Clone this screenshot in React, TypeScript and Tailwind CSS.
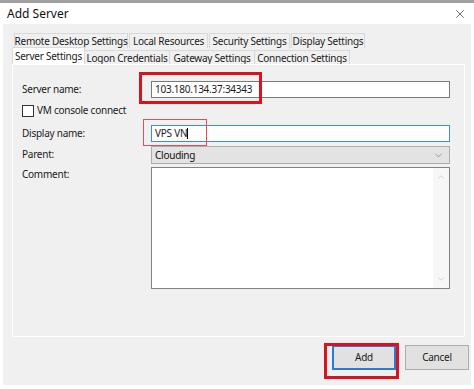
import { X, ChevronDown, ChevronUp } from "lucide-react";

const font = { fontFamily: '"Noto Sans", "Open Sans", sans-serif' };

const backTabs = [
  { label: "Remote Desktop Settings", w: "w-[114px]" },
  { label: "Local Resources", w: "w-[79px]" },
  { label: "Security Settings", w: "w-[81px]" },
  { label: "Display Settings", w: "w-[74px]" },
];

const frontTabs = [
  { label: "Logon Credentials", w: "w-[85px]" },
  { label: "Gateway Settings", w: "w-[85px]" },
  { label: "Connection Settings", w: "w-[95px]" },
];

export default function App() {
  return (
    <div
      className="w-[474px] h-[389px] bg-white overflow-hidden text-[10px] tracking-[-0.25px] whitespace-nowrap text-[#1b1b1b] relative"
      style={font}
    >
      {/* window top edge */}
      <div className="h-[3px] bg-[#a0a0a0]" />

      {/* title bar */}
      <div className="h-[21px] flex items-center justify-between pl-[7px] pr-[7px]">
        <span className="text-[12px] tracking-normal text-[#111]">Add Server</span>
        <X size={14} strokeWidth={1.2} className="text-[#333]" />
      </div>

      {/* body */}
      <div className="ml-[3px] mr-[3px] h-[361px] bg-[#f0f0f0] pt-[9px] flex flex-col">
        {/* back row of tabs */}
        <div className="flex pl-[11px] h-[14px] gap-[1px]">
          {backTabs.map((t) => (
            <div
              key={t.label}
              className={`${t.w} h-[15px] border border-b-0 border-[#d9d9d9] flex items-center justify-center leading-none`}
            >
              {t.label}
            </div>
          ))}
        </div>

        {/* front row of tabs */}
        <div className="flex pl-[9px] h-[17px] items-end">
          <div className="w-[73px] h-[17px] bg-white border border-b-0 border-[#d9d9d9] flex items-center justify-center leading-none relative z-10">
            Server Settings
          </div>
          {frontTabs.map((t) => (
            <div
              key={t.label}
              className={`${t.w} h-[14px] border border-b-0 border-l-0 border-[#d9d9d9] flex items-center justify-center leading-none`}
            >
              {t.label}
            </div>
          ))}
        </div>

        {/* tab panel */}
        <div className="ml-[9px] w-[453px] h-[273px] border border-white bg-[#f0f0f0] pl-[9px] pt-[16px]">
          <div className="flex items-center h-[17px]">
            <span className="w-[129px]">Server name:</span>
            <div className="w-[299px] h-[17px] bg-white border border-[#7a7a7a] flex items-center px-[3px]">
              103.180.134.37:34343
            </div>
          </div>

          <div className="flex items-center h-[13px] mt-[6px]">
            <div className="w-[12px] h-[12px] border border-[#333] bg-white" />
            <span className="ml-[3px]">VM console connect</span>
          </div>

          <div className="flex items-center h-[17px] mt-[8px]">
            <span className="w-[129px]">Display name:</span>
            <div className="w-[299px] h-[17px] bg-white border border-[#3b8ddd] flex items-center px-[3px]">
              VPS VN
              <span className="w-[1px] h-[11px] bg-black" />
            </div>
          </div>

          <div className="flex items-center h-[18px] mt-[4px]">
            <span className="w-[129px] -mt-[2px]">Parent:</span>
            <div className="w-[299px] h-[18px] bg-[#e3e3e3] border border-[#adadad] flex items-center justify-between px-[3px]">
              <span className="text-[#111]">Clouding</span>
              <ChevronDown size={11} strokeWidth={1.3} className="text-[#666] mr-[2px]" />
            </div>
          </div>

          <div className="flex items-start mt-[3px]">
            <span className="w-[129px] mt-0">Comment:</span>
            <div className="w-[299px] h-[122px] bg-white border border-[#828282] flex justify-end">
              <div className="w-[16px] h-full flex flex-col items-center justify-between py-[4px] bg-[#f7f7f7]">
                <ChevronUp size={10} strokeWidth={1.3} className="text-[#b5b5b5]" />
                <ChevronDown size={10} strokeWidth={1.3} className="text-[#b5b5b5]" />
              </div>
            </div>
          </div>
        </div>

        {/* buttons */}
        <div className="flex justify-end gap-[9px] pr-[2px] mt-[8px]">
          <div className="w-[64px] h-[25px] bg-[#e1e1e1] border-2 border-[#2a7bd4] flex items-center justify-center">
            Add
          </div>
          <div className="w-[64px] h-[25px] bg-[#e1e1e1] border border-[#adadad] flex items-center justify-center">
            Cancel
          </div>
        </div>
      </div>

      {/* red highlight boxes */}
      <div className="absolute left-[139px] top-[72px] w-[123px] h-[32px] border-[3px] border-[#d9121f]" />
      <div className="absolute left-[143px] top-[119px] w-[64px] h-[27px] border-[1.5px] border-[#e0505a]" />
      <div className="absolute left-[324px] top-[343px] w-[75px] h-[36px] border-[3px] border-[#d9121f]" />
    </div>
  );
}
